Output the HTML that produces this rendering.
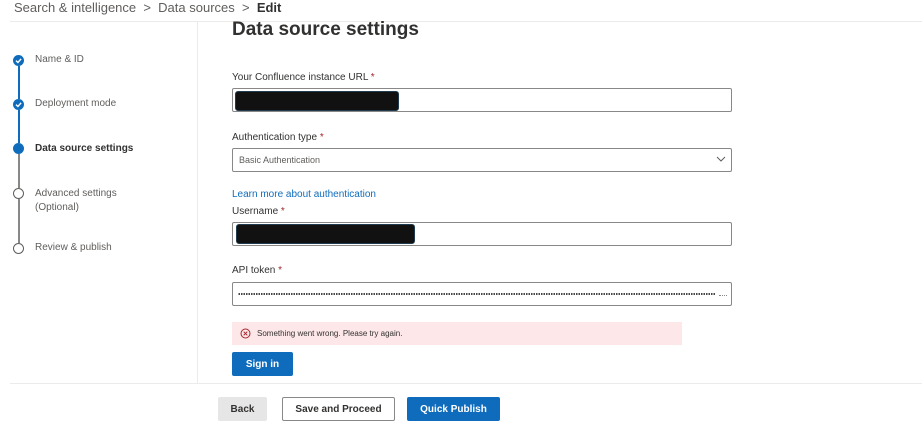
<!DOCTYPE html>
<html><head><style>
body{margin:0;width:922px;height:430px;background:#fff;font-family:"Liberation Sans",sans-serif;color:#323130;position:relative;overflow:hidden}
.a{position:absolute}
.lbl{font-size:10px;color:#323130}
.req{color:#a4262c}
.inp{position:absolute;left:232px;width:498px;height:22px;border:1px solid #8a8886;border-radius:2px;background:#fff}
.blk{position:absolute;background:#111;border-radius:3px;border:1px solid #1f3b4f}
.step{position:absolute;left:13px;width:11px;height:11px;border-radius:50%;z-index:2;box-sizing:border-box}
.step svg{display:block}
.sl{position:absolute;left:35px;font-size:10px;color:#605e5c}
.btn{position:absolute;top:397px;height:24px;font-size:10px;font-weight:bold;display:flex;align-items:center;justify-content:center;box-sizing:border-box;border-radius:2px}
</style></head><body>
<div class="a" style="left:14px;top:0;font-size:13px;color:#605e5c">Search &amp; intelligence &nbsp;&gt;&nbsp; Data sources &nbsp;&gt;&nbsp; <span style="color:#323130;font-weight:bold">Edit</span></div>
<div class="a" style="left:10px;top:21px;width:912px;height:1px;background:#edebe9"></div>
<div class="a" style="left:197px;top:21px;width:1px;height:362px;background:#edebe9"></div>
<div class="a" style="left:10px;top:383px;width:912px;height:1px;background:#edebe9"></div>

<div class="a" style="left:18px;top:66px;width:2px;height:33px;background:#0f6cbd"></div>
<div class="a" style="left:18px;top:110px;width:2px;height:33px;background:#0f6cbd"></div>
<div class="a" style="left:18px;top:154px;width:2px;height:34px;background:#8a8886"></div>
<div class="a" style="left:18px;top:199px;width:2px;height:44px;background:#8a8886"></div>
<div class="step" style="top:55px;background:#0f6cbd"><svg width="11" height="11"><path d="M3 5.6l1.9 1.9 3.2-3.6" stroke="#fff" stroke-width="1.4" fill="none"/></svg></div>
<div class="step" style="top:99px;background:#0f6cbd"><svg width="11" height="11"><path d="M3 5.6l1.9 1.9 3.2-3.6" stroke="#fff" stroke-width="1.4" fill="none"/></svg></div>
<div class="step" style="top:143px;background:#0f6cbd"></div>
<div class="step" style="top:188px;border:1px solid #605e5c;background:#fff"></div>
<div class="step" style="top:243px;border:1px solid #605e5c;background:#fff"></div>
<div class="sl" style="top:54px">Name &amp; ID</div>
<div class="sl" style="top:98px">Deployment mode</div>
<div class="sl" style="top:143px;color:#323130;font-weight:bold">Data source settings</div>
<div class="sl" style="top:187px;line-height:14px">Advanced settings<br>(Optional)</div>
<div class="sl" style="top:242px">Review &amp; publish</div>

<div class="a" style="left:232px;top:19px;font-size:19px;font-weight:bold;color:#323130">Data source settings</div>
<div class="a lbl" style="left:232px;top:72px">Your Confluence instance URL <span class="req">*</span></div>
<div class="inp" style="top:88px"></div>
<div class="blk" style="left:235px;top:91px;width:162px;height:18px"></div>
<div class="a lbl" style="left:232px;top:132px">Authentication type <span class="req">*</span></div>
<div class="inp" style="top:148px"></div>
<div class="a" style="left:239px;top:155px;font-size:9px;color:#605e5c">Basic Authentication</div>
<svg class="a" style="left:716px;top:155px" width="10" height="8"><path d="M1 2l4 4 4-4" stroke="#605e5c" fill="none"/></svg>
<div class="a" style="left:232px;top:189px;font-size:10px;color:#0f6cbd">Learn more about authentication</div>
<div class="a lbl" style="left:232px;top:206px">Username <span class="req">*</span></div>
<div class="inp" style="top:222px"></div>
<div class="blk" style="left:236px;top:224px;width:177px;height:18px"></div>
<div class="a lbl" style="left:232px;top:265px">API token <span class="req">*</span></div>
<div class="inp" style="top:282px"></div>
<div class="a" style="left:238px;top:293px;width:478px;height:2px;background:radial-gradient(circle,#444 0.9px,transparent 1px) 0 0/2.5px 2px repeat-x"></div>
<div class="a" style="left:719px;top:295px;width:8px;height:1px;border-top:1px dotted #888"></div>
<div class="a" style="left:232px;top:322px;width:450px;height:23px;background:#fde7e9"></div>
<svg class="a" style="left:240px;top:328px" width="11" height="11"><circle cx="5.5" cy="5.5" r="4.5" stroke="#a4262c" fill="none"/><path d="M3.7 3.7l3.6 3.6M7.3 3.7l-3.6 3.6" stroke="#a4262c"/></svg>
<div class="a" style="left:257px;top:329px;font-size:8px;color:#323130">Something went wrong. Please try again.</div>
<div class="btn" style="left:232px;top:352px;width:61px;background:#0f6cbd;color:#fff">Sign in</div>

<div class="btn" style="left:218px;width:49px;background:#e6e6e6;color:#323130">Back</div>
<div class="btn" style="left:282px;width:113px;border:1px solid #8a8886;color:#323130">Save and Proceed</div>
<div class="btn" style="left:407px;width:93px;background:#0f6cbd;color:#fff">Quick Publish</div>
</body></html>
